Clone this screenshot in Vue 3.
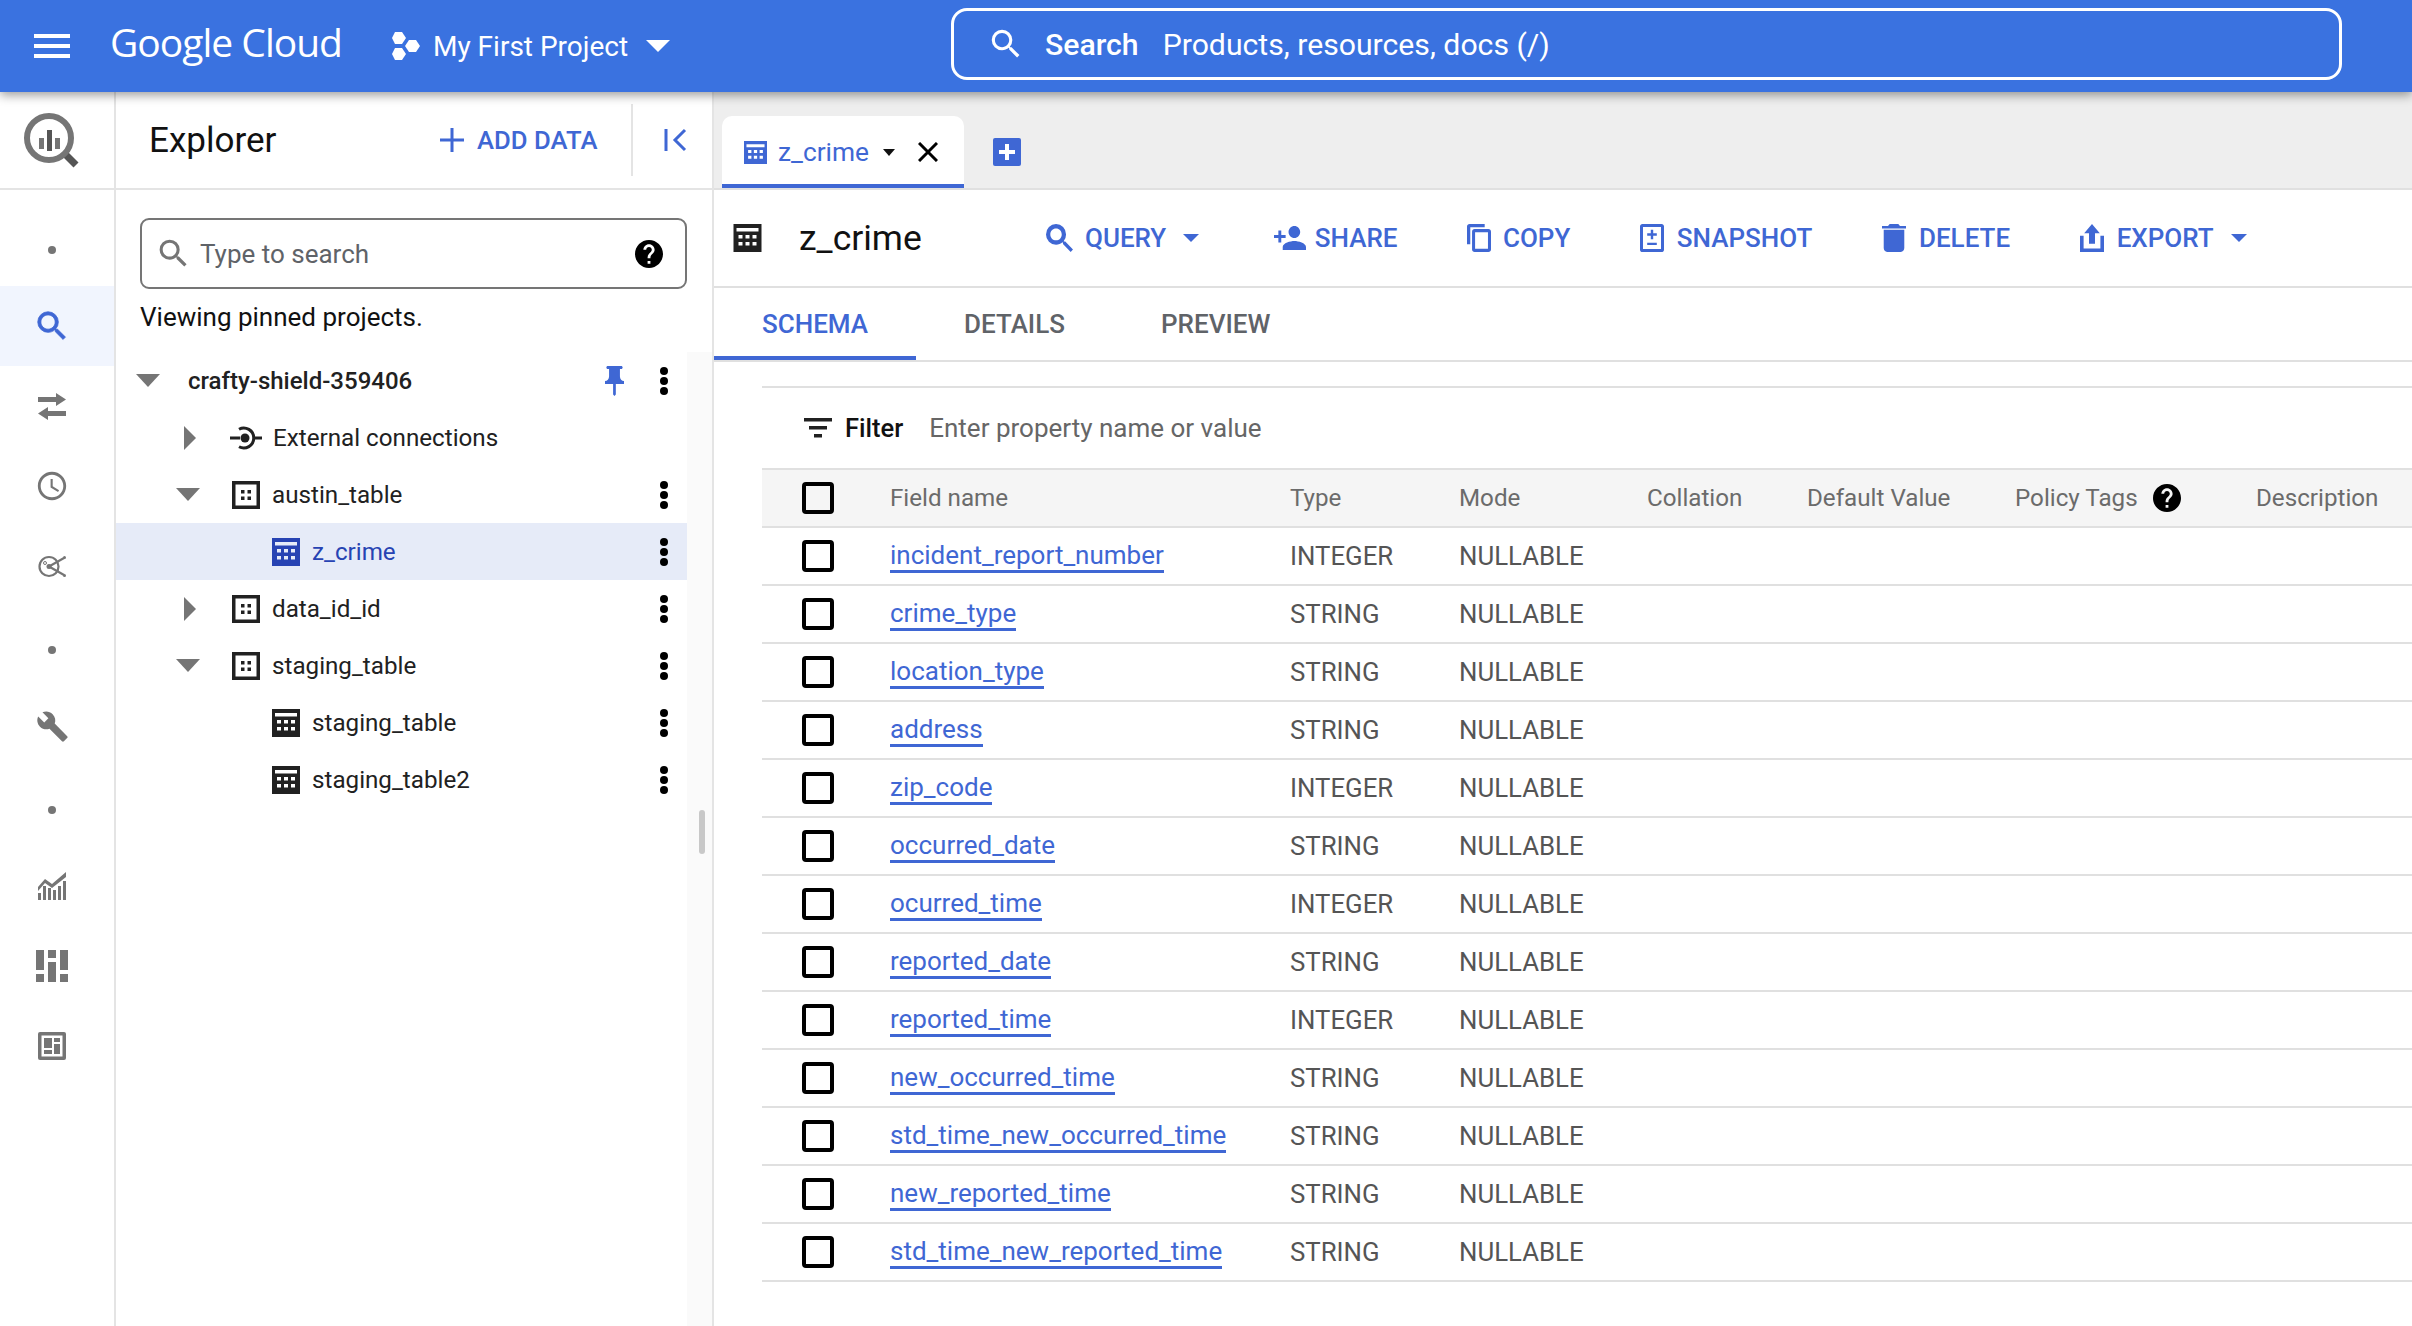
<template>
  <div class="page">
    <header class="topbar">
      <svg class="menu-icon" viewBox="0 0 36 24"><rect y="0" width="36" height="4" /><rect y="10" width="36" height="4" /><rect y="20" width="36" height="4" /></svg>
      <span class="brand">Google Cloud</span>
      <svg class="project-icon" viewBox="0 0 28 28">
        <polygon points="3,0 10,0 14,6 10,12 3,12 0,6" />
        <polygon points="17,8 24,8 28,14 24,20 17,20 13,14" />
        <polygon points="3,16 10,16 14,22 10,28 3,28 0,22" />
      </svg>
      <span class="project-name">My First Project</span>
      <span class="project-caret"></span>
      <div class="global-search">
        <svg class="global-search-icon" viewBox="0 0 24 24"><path :d="icons.search" /></svg>
        <span class="global-search-label">Search</span>
        <span class="global-search-hint">Products, resources, docs (/)</span>
      </div>
    </header>

    <div class="content">
      <aside class="rail">
        <div class="rail-logo">
          <svg viewBox="0 0 60 60" width="60" height="60">
            <line x1="42" y1="43" x2="54" y2="55" stroke="#555" stroke-width="7" />
            <circle cx="27" cy="28" r="22" fill="none" stroke="#757575" stroke-width="6" />
            <rect x="17" y="28" width="5" height="11" fill="#757575" />
            <rect x="25" y="20" width="5" height="21" fill="#555" />
            <rect x="33" y="28" width="5" height="11" fill="#757575" />
          </svg>
        </div>
        <nav class="rail-nav">
          <div v-for="(item, i) in railItems" :key="i" class="rail-item" :class="{ active: item === 'search', dotted: item === 'dot' }">
            <span v-if="item === 'dot'" class="rail-dot"></span>
            <svg v-else-if="item === 'swap'" class="ri-swap" viewBox="0 0 28 27" fill="#757575">
              <path d="M0 4h18V0l10 6.500-10 6.500V9H0zM28 18H10v-4L0 20.500 10 27v-4h18z" />
            </svg>
            <svg v-else-if="item === 'analytics'" class="ri-analytics" viewBox="0 0 29 23" fill="none" stroke="#757575" stroke-width="2.2">
              <circle cx="11" cy="11.500" r="9.500" />
              <circle cx="11" cy="11.500" r="2.500" fill="#757575" stroke="none" />
              <circle cx="7" cy="8" r="1.500" stroke-width="1" />
              <line x1="11" y1="11.500" x2="26" y2="3" />
              <line x1="11" y1="11.500" x2="26" y2="20" />
              <circle cx="26.500" cy="2.500" r="1.500" fill="#757575" stroke="none" />
              <circle cx="26.500" cy="20.500" r="1.500" fill="#757575" stroke="none" />
            </svg>
            <svg v-else-if="item === 'chart'" class="ri-small" viewBox="0 0 28 28" fill="#757575">
              <polygon points="0,15 7,7 14,12 28,0 28,5 14,16 7,11 0,19" />
              <rect x="0" y="21" width="3" height="7" /><rect x="5" y="14" width="3" height="14" />
              <rect x="10" y="16" width="3" height="12" /><rect x="15" y="18" width="3" height="10" />
              <rect x="20" y="14" width="3" height="14" /><rect x="25" y="9" width="3" height="19" />
            </svg>
            <svg v-else-if="item === 'board'" class="ri-board" viewBox="0 0 32 32" fill="#757575">
              <rect x="0" y="0" width="8" height="20" /><rect x="0" y="24" width="8" height="8" />
              <rect x="12" y="0" width="8" height="8" /><rect x="12" y="12" width="8" height="20" />
              <rect x="24" y="0" width="8" height="20" /><rect x="24" y="24" width="8" height="8" />
            </svg>
            <svg v-else-if="item === 'tableboard'" class="ri-small" viewBox="0 0 28 28">
              <rect width="28" height="28" rx="2" fill="#757575" />
              <rect x="3.500" y="3.500" width="21" height="21" fill="#fff" />
              <rect x="6" y="6" width="8" height="10" fill="#757575" /><rect x="6" y="18" width="8" height="4" fill="#757575" />
              <rect x="16" y="6" width="6" height="4" fill="#757575" /><rect x="16" y="12" width="6" height="10" fill="#757575" />
            </svg>
            <svg v-else :class="'ri-' + item" viewBox="0 0 24 24" :fill="item === 'search' ? '#3f67d4' : '#757575'" :stroke="item === 'search' ? '#3f67d4' : 'none'" stroke-width="0.5"><path :d="icons[item]" /></svg>
          </div>
        </nav>
      </aside>

      <section class="explorer">
        <div class="explorer-head">
          <span class="explorer-title">Explorer</span>
          <svg class="add-icon" viewBox="0 0 24 24"><path d="M10.500 0h3v10.500H24v3H13.500V24h-3V13.500H0v-3h10.500z" /></svg>
          <span class="add-label">ADD DATA</span>
          <span class="head-divider"></span>
          <svg class="collapse-icon" viewBox="0 0 24 24" fill="none" stroke="#3f67d4" stroke-width="3"><path d="M2 1v22M21 2 11 12l10 10" /></svg>
        </div>
        <div class="explorer-search">
          <svg class="search-icon" viewBox="0 0 24 24"><path :d="icons.search" /></svg>
          <span class="search-placeholder">Type to search</span>
          <svg class="search-help" viewBox="2 2 20 20"><path :d="icons.help" /></svg>
        </div>
        <div class="pinned-note">Viewing pinned projects.</div>
        <div class="tree-wrap">
          <div class="tree">
            <div v-for="node in tree" :key="node.name + node.depth" class="tree-row" :class="{ selected: node.selected, project: node.depth === 0 }" :style="{ paddingLeft: 12 + node.depth * 40 + 'px' }">
              <span class="caret-box">
                <span v-if="node.open === true" class="caret-down"></span>
                <span v-else-if="node.open === false" class="caret-right"></span>
              </span>
              <svg v-if="node.kind === 'dataset'" class="node-icon" viewBox="0 0 28 28">
                <rect x="1.750" y="1.750" width="24.500" height="24.500" fill="none" stroke="#212121" stroke-width="3.500" />
                <rect x="9" y="9" width="3.500" height="3.500" fill="#212121" /><rect x="15.500" y="9" width="3.500" height="3.500" fill="#212121" />
                <rect x="9" y="15.500" width="3.500" height="3.500" fill="#212121" /><rect x="15.500" y="15.500" width="3.500" height="3.500" fill="#212121" />
              </svg>
              <svg v-else-if="node.kind === 'table'" class="node-icon" viewBox="0 0 28 28" :fill="node.selected ? '#2743b3' : '#212121'">
                <path :d="icons.table" fill-rule="evenodd" />
              </svg>
              <svg v-else-if="node.kind === 'connection'" class="conn-icon" viewBox="0 0 32 24" fill="none" stroke="#212121" stroke-width="3">
                <circle cx="15" cy="12" r="4.500" fill="#212121" stroke="none" />
                <path d="M0 12h10M23 12h9" />
                <path d="M9 3.200a10 10 0 1 1 0 17.600" />
              </svg>
              <span class="node-name">{{ node.name }}</span>
              <svg v-if="node.pinned" class="pin-icon" viewBox="5 2 14 20" preserveAspectRatio="none"><path :d="icons.pin" /></svg>
              <span v-if="node.kind !== 'connection'" class="kebab"><i></i><i></i><i></i></span>
            </div>
          </div>
          <div class="tree-gutter"><div class="thumb"></div></div>
        </div>
      </section>

      <main class="main">
        <div class="tab-strip">
          <div class="tab">
            <svg class="tab-icon" viewBox="0 0 28 28"><path :d="icons.table" fill-rule="evenodd" /></svg>
            <span class="tab-name">z_crime</span>
            <span class="mini-caret dark"></span>
            <svg class="tab-close" viewBox="0 0 20 20" fill="none" stroke="#000" stroke-width="3"><path d="M1 1l18 18M19 1 1 19" /></svg>
          </div>
          <div class="tab-add">
            <svg viewBox="0 0 28 28" width="28" height="28"><rect width="28" height="28" rx="2" fill="#3f67d4" /><path d="M12 6h4v6h6v4h-6v6h-4v-6H6v-4h6z" fill="#fff" /></svg>
          </div>
        </div>

        <div class="toolbar">
          <svg class="title-icon" viewBox="0 0 28 28"><path :d="icons.table" fill-rule="evenodd" /></svg>
          <span class="title-name">z_crime</span>
          <div class="actions">
            <div v-for="a in actions" :key="a.label" class="action">
              <svg class="action-icon" :class="a.icon" :viewBox="a.box" preserveAspectRatio="none"><path :d="icons[a.icon]" fill-rule="evenodd" /></svg>
              <span>{{ a.label }}</span>
              <span v-if="a.caret" class="mini-caret"></span>
            </div>
          </div>
        </div>

        <div class="tabs">
          <span v-for="t in tabs" :key="t" class="tab-link" :class="{ current: t === 'SCHEMA' }">{{ t }}</span>
        </div>

        <div class="schema">
          <div class="filter">
            <svg class="filter-icon" viewBox="0 0 28 20" fill="#212121"><rect width="28" height="3.500" /><rect x="5" y="8" width="18" height="3.500" /><rect x="10" y="16" width="8" height="3.500" /></svg>
            <span class="filter-label">Filter</span>
            <span class="filter-hint">Enter property name or value</span>
          </div>
          <div class="grid-row grid-head">
            <span class="check"></span>
            <span>Field name</span>
            <span>Type</span>
            <span>Mode</span>
            <span>Collation</span>
            <span>Default Value</span>
            <span class="policy">Policy Tags
              <svg class="policy-help" viewBox="2 2 20 20"><path :d="icons.help" /></svg>
            </span>
            <span>Description</span>
          </div>
          <div v-for="f in fields" :key="f.name" class="grid-row">
            <span class="check"></span>
            <span><a class="field-link">{{ f.name }}</a></span>
            <span>{{ f.type }}</span>
            <span>NULLABLE</span>
          </div>
        </div>
      </main>
    </div>
  </div>
</template>

<script setup>
const icons = {
  search: 'M15.5 14h-.79l-.28-.27A6.471 6.471 0 0 0 16 9.5 6.5 6.5 0 1 0 9.5 16c1.61 0 3.09-.59 4.23-1.57l.27.28v.79l5 4.99L20.49 19l-4.99-5zm-6 0C7.01 14 5 11.99 5 9.5S7.01 5 9.5 5 14 7.01 14 9.5 11.99 14 9.5 14z',
  clock: 'M11.99 2C6.47 2 2 6.48 2 12s4.47 10 9.99 10C17.52 22 22 17.52 22 12S17.52 2 11.99 2zM12 20c-4.42 0-8-3.58-8-8s3.58-8 8-8 8 3.58 8 8-3.58 8-8 8zm.5-13H11v6l5.25 3.15.75-1.23-4.5-2.67z',
  wrench: 'M22.7 19l-9.1-9.1c.9-2.3.4-5-1.5-6.9-2-2-5-2.4-7.4-1.3L9 6 6 9 1.6 4.7C.4 7.1.9 10.1 2.9 12.1c1.9 1.9 4.6 2.4 6.9 1.5l9.1 9.1c.4.4 1 .4 1.4 0l2.3-2.3c.5-.4.5-1.1.1-1.4z',
  help: 'M12 2C6.48 2 2 6.48 2 12s4.48 10 10 10 10-4.48 10-10S17.52 2 12 2zm1 17h-2v-2h2v2zm2.07-7.75l-.9.92C13.45 12.9 13 13.5 13 15h-2v-.5c0-1.1.45-2.1 1.17-2.83l1.24-1.26c.37-.36.59-.86.59-1.41 0-1.1-.9-2-2-2s-2 .9-2 2H8c0-2.21 1.79-4 4-4s4 1.79 4 4c0 .88-.36 1.68-.93 2.25z',
  pin: 'M16 9V4h1c.55 0 1-.45 1-1s-.45-1-1-1H7c-.55 0-1 .45-1 1s.45 1 1 1h1v5c0 1.66-1.34 3-3 3v2h5.97v7l1 1 1-1v-7H19v-2c-1.66 0-3-1.34-3-3z',
  table: 'M0 0h28v28H0zM3 4v3.5h22V4zM5 11v3.5h4V11zM12 11v3.5h4V11zM19 11v3.5h4V11zM5 18v3.5h4V18zM12 18v3.5h4V18zM19 18v3.5h4V18z',
  person: 'M15 12c2.21 0 4-1.79 4-4s-1.79-4-4-4-4 1.79-4 4 1.79 4 4 4zm-9-2V7H4v3H1v2h3v3h2v-3h3v-2H6zm9 4c-2.67 0-8 1.34-8 4v2h16v-2c0-2.66-5.33-4-8-4z',
  copy: 'M16 1H4c-1.1 0-2 .9-2 2v14h2.600V3.600H16V1zm3 4H8c-1.1 0-2 .9-2 2v14c0 1.1.9 2 2 2h11c1.1 0 2-.9 2-2V7c0-1.1-.9-2-2-2zm-.4 15.500H8.400V7.500h10.200v13z',
  snapshot: 'M4 0h16c1.100 0 2 .9 2 2v20c0 1.100-.9 2-2 2H4c-1.100 0-2-.9-2-2V2C2 .9 2.900 0 4 0zM4.500 2.500v19h15v-19zM11 5h2v3h3v2h-3v3h-2v-3H8V8h3zM8 16h8v2H8z',
  trash: 'M6 21c0 1.650.9 3 2 3h8c1.100 0 2-1.350 2-3V7H6zM19 4h-3.500l-1-1.500h-5l-1 1.500H5v2h14z',
  upload: 'M12 0l6.500 8H14.500v9h-5V8H5.500zM2 10h3v11h14V10h3v14H2z',
  query: 'M15.5 14h-.79l-.28-.27A6.471 6.471 0 0 0 16 9.5 6.5 6.5 0 1 0 9.5 16c1.61 0 3.09-.59 4.23-1.57l.27.28v.79l5 4.99L20.49 19l-4.99-5zm-6-.8C7.400 13.200 5.800 11.600 5.800 9.500S7.400 5.800 9.500 5.800 13.200 7.400 13.200 9.500 11.600 13.200 9.500 13.200z',
}

const railItems = ['dot', 'search', 'swap', 'clock', 'analytics', 'dot', 'wrench', 'dot', 'chart', 'board', 'tableboard']

const tree = [
  { name: 'crafty-shield-359406', depth: 0, open: true, pinned: true, kind: 'project' },
  { name: 'External connections', depth: 1, open: false, kind: 'connection' },
  { name: 'austin_table', depth: 1, open: true, kind: 'dataset' },
  { name: 'z_crime', depth: 2, kind: 'table', selected: true },
  { name: 'data_id_id', depth: 1, open: false, kind: 'dataset' },
  { name: 'staging_table', depth: 1, open: true, kind: 'dataset' },
  { name: 'staging_table', depth: 2, kind: 'table' },
  { name: 'staging_table2', depth: 2, kind: 'table' },
]

const actions = [
  { label: 'QUERY', icon: 'query', caret: true, box: '3 3 17.500 17.500' },
  { label: 'SHARE', icon: 'person', box: '1 4 22 16' },
  { label: 'COPY', icon: 'copy', box: '2 1 19 22' },
  { label: 'SNAPSHOT', icon: 'snapshot', box: '2 0 20 24' },
  { label: 'DELETE', icon: 'trash', box: '5 2.500 14 21.500' },
  { label: 'EXPORT', icon: 'upload', caret: true, box: '2 0 20 24' },
]

const tabs = ['SCHEMA', 'DETAILS', 'PREVIEW']

const fields = [
  { name: 'incident_report_number', type: 'INTEGER' },
  { name: 'crime_type', type: 'STRING' },
  { name: 'location_type', type: 'STRING' },
  { name: 'address', type: 'STRING' },
  { name: 'zip_code', type: 'INTEGER' },
  { name: 'occurred_date', type: 'STRING' },
  { name: 'ocurred_time', type: 'INTEGER' },
  { name: 'reported_date', type: 'STRING' },
  { name: 'reported_time', type: 'INTEGER' },
  { name: 'new_occurred_time', type: 'STRING' },
  { name: 'std_time_new_occurred_time', type: 'STRING' },
  { name: 'new_reported_time', type: 'STRING' },
  { name: 'std_time_new_reported_time', type: 'STRING' },
]
</script>

<style>
html, body { margin: 0; background: #fff; overflow: hidden; }
</style>

<style scoped>
.page {
  width: 2412px;
  height: 1326px;
  display: flex;
  flex-direction: column;
  overflow: hidden;
  font-family: Roboto, "Liberation Sans", sans-serif;
  color: #202124;
  background: #fff;
}

/* top bar */
.topbar {
  height: 92px;
  flex: none;
  display: flex;
  align-items: center;
  background: #3a72e0;
  color: #fff;
  position: relative;
  z-index: 2;
  box-shadow: 0 3px 10px rgba(0, 0, 0, 0.4);
}
.menu-icon { width: 36px; height: 24px; margin-left: 34px; fill: #fff; }
.brand { margin-left: 40px; font-family: "Open Sans", sans-serif; font-size: 39px; letter-spacing: -1px; line-height: 1; margin-top: -9px; }
.project-icon { width: 28px; height: 28px; margin-left: 50px; fill: #fff; }
.project-name { margin-left: 13px; font-size: 28px; }
.project-caret { margin-left: 18px; border-left: 12px solid transparent; border-right: 12px solid transparent; border-top: 12px solid #fff; }
.global-search {
  position: absolute;
  left: 951px;
  top: 8px;
  width: 1391px;
  height: 72px;
  box-sizing: border-box;
  border: 3px solid #fff;
  border-radius: 16px;
  display: flex;
  align-items: center;
  font-size: 30.200px;
}
.global-search-icon { width: 38px; height: 38px; margin-left: 33px; fill: #fff; }
.global-search-label { margin-left: 20px; font-weight: 500; }
.global-search-hint { margin-left: 24px; }

.content { flex: 1; display: flex; min-height: 0; }

/* left rail */
.rail { width: 116px; flex: none; box-sizing: border-box; border-right: 2px solid #e4e4e4; }
.rail-logo { height: 98px; box-sizing: border-box; border-bottom: 2px solid #e4e4e4; padding: 18px 0 0 22px; }
.rail-nav { padding-top: 16px; }
.rail-item { height: 80px; display: flex; align-items: center; justify-content: center; padding-right: 10px; box-sizing: border-box; }
.rail-item.active { background: #f1f5fe; }
.rail-item.dotted { padding-top: 8px; }
.rail-dot { width: 8px; height: 8px; border-radius: 50%; background: #757575; }
.ri-search { width: 38px; height: 38px; }
.ri-swap { width: 28px; height: 27px; }
.ri-clock { width: 34px; height: 34px; }
.ri-wrench { width: 33px; height: 33px; }
.ri-analytics { width: 29px; height: 23px; }
.ri-small { width: 28px; height: 28px; }
.ri-board { width: 32px; height: 32px; }

/* explorer */
.explorer { width: 598px; flex: none; box-sizing: border-box; border-right: 2px solid #e4e4e4; display: flex; flex-direction: column; }
.explorer-head { height: 98px; flex: none; box-sizing: border-box; border-bottom: 2px solid #e4e4e4; display: flex; align-items: center; padding-left: 33px; }
.explorer-title { font-size: 35px; color: #111; width: 291px; }
.add-icon { width: 24px; height: 24px; fill: #3f67d4; }
.add-label { margin-left: 13px; font-size: 25.700px; font-weight: 500; color: #3f67d4; width: 154px; }
.head-divider { width: 2px; height: 72px; background: #e4e4e4; }
.collapse-icon { width: 24px; height: 24px; margin-left: 31px; }

.explorer-search {
  margin: 28px 25px 0 24px;
  height: 71px;
  flex: none;
  box-sizing: border-box;
  border: 2px solid #757575;
  border-radius: 9px;
  display: flex;
  align-items: center;
  padding: 0 22px 0 13px;
}
.search-icon { width: 37px; height: 37px; fill: #757575; }
.search-placeholder { margin-left: 8px; font-size: 26px; color: #5f6368; flex: 1; }
.search-help { width: 28px; height: 28px; fill: #000; }
.pinned-note { margin: 12px 0 0 24px; font-size: 26px; line-height: 32px; color: #111; height: 32px; flex: none; }

.tree-wrap { flex: 1; display: flex; margin-top: 19px; min-height: 0; }
.tree { flex: 1; }
.tree-gutter { width: 25px; flex: none; background: #fafafa; padding: 458px 0 0 12px; box-sizing: border-box; }
.thumb { width: 6px; height: 44px; border-radius: 3px; background: #c8c8c8; }
.tree-row { height: 57px; box-sizing: border-box; display: flex; align-items: center; padding-right: 19px; font-size: 24.200px; color: #212121; }
.tree-row.project { font-weight: 500; font-size: 24px; }
.tree-row.selected { background: #e6ebf8; color: #2743b3; }
.caret-box { width: 40px; flex: none; display: flex; justify-content: center; }
.caret-down { border-left: 12px solid transparent; border-right: 12px solid transparent; border-top: 13px solid #757575; }
.caret-right { border-top: 12px solid transparent; border-bottom: 12px solid transparent; border-left: 12px solid #757575; margin-left: 4px; }
.node-icon { width: 28px; height: 28px; margin-left: 24px; flex: none; }
.conn-icon { width: 32px; height: 24px; margin-left: 22px; flex: none; margin-right: -1px; }
.node-name { margin-left: 12px; flex: 1; }
.project .node-name { margin-left: 20px; }
.pin-icon { width: 19px; height: 30px; fill: #3f67d4; margin-right: 36px; }
.kebab { width: 8px; display: flex; flex-direction: column; gap: 2px; flex: none; }
.kebab i { width: 8px; height: 8px; border-radius: 50%; background: #000; display: block; }

/* main */
.main { flex: 1; min-width: 0; display: flex; flex-direction: column; }
.tab-strip { height: 98px; flex: none; box-sizing: border-box; background: #eee; border-bottom: 2px solid #e0e0e0; padding-left: 8px; display: flex; align-items: flex-end; }
.tab { width: 242px; height: 72px; box-sizing: border-box; background: #fff; border-radius: 10px 10px 0 0; border-bottom: 4px solid #3f67d4; display: flex; align-items: center; padding: 4px 0 0 22px; }
.tab-icon { width: 23px; height: 23px; fill: #3f67d4; }
.tab-name { margin-left: 11px; font-size: 26.300px; color: #3f67d4; }
.mini-caret { display: inline-block; border-left: 8px solid transparent; border-right: 8px solid transparent; border-top: 8px solid #3f67d4; }
.mini-caret.dark { margin-left: 14px; border-left-width: 6.500px; border-right-width: 6.500px; border-top: 7px solid #111; }
.tab-close { width: 20px; height: 20px; margin-left: 23px; }
.tab-add { margin: 0 0 22px 29px; height: 28px; }

.toolbar { height: 98px; flex: none; box-sizing: border-box; border-bottom: 2px solid #e0e0e0; display: flex; align-items: center; padding-left: 19px; }
.title-icon { width: 29px; height: 28px; fill: #212121; }
.title-name { margin-left: 37px; font-size: 35.500px; color: #111; width: 247px; flex: none; }
.actions { display: flex; gap: 69.500px; align-items: center; }
.action { display: flex; align-items: center; font-size: 26px; font-weight: 500; color: #3f67d4; }
.action:first-child { margin-right: 5px; }
.action-icon { width: 24px; height: 28px; fill: #3f67d4; margin-right: 13px; flex: none; }
.action-icon.query { width: 27px; margin-right: 12px; }
.action-icon.person { width: 32px; height: 24px; margin-right: 9px; }
.action-icon.copy { margin-right: 12px; }
.action .mini-caret { margin-left: 17px; }

.tabs { height: 74px; flex: none; box-sizing: border-box; border-bottom: 2px solid #e0e0e0; display: flex; }
.tab-link { padding: 0 48px; height: 72px; box-sizing: border-box; line-height: 72px; font-size: 26px; font-weight: 500; color: #5f6368; }
.tab-link.current { color: #3f67d4; border-bottom: 4px solid #3f67d4; }

.schema { margin: 24px 0 0 48px; border-top: 2px solid #e0e0e0; }
.filter { height: 80px; display: flex; align-items: center; padding-left: 42px; }
.filter-icon { width: 28px; height: 20px; }
.filter-label { margin-left: 13px; font-size: 25.500px; font-weight: 500; color: #111; }
.filter-hint { margin-left: 26px; font-size: 26px; color: #666; }

.grid-row {
  display: grid;
  grid-template-columns: 128px 400px 169px 188px 160px 208px 241px 1fr;
  align-items: center;
  height: 58px;
  box-sizing: border-box;
  border-bottom: 2px solid #e0e0e0;
  font-size: 25.800px;
  color: #555;
}
.grid-head { height: 60px; background: #f5f5f5; border-top: 2px solid #e0e0e0; font-size: 24.200px; color: #6b6b6b; }
.check { width: 32px; height: 32px; margin-left: 40px; box-sizing: border-box; border: 4px solid #000; border-radius: 4px; display: block; }
.field-link { display: inline-block; line-height: 30px; border-bottom: 3px solid #3f67d4; color: #3f67d4; font-size: 26px; }
.policy { display: flex; align-items: center; }
.policy-help { width: 28px; height: 28px; fill: #000; margin-left: 15px; }
</style>
